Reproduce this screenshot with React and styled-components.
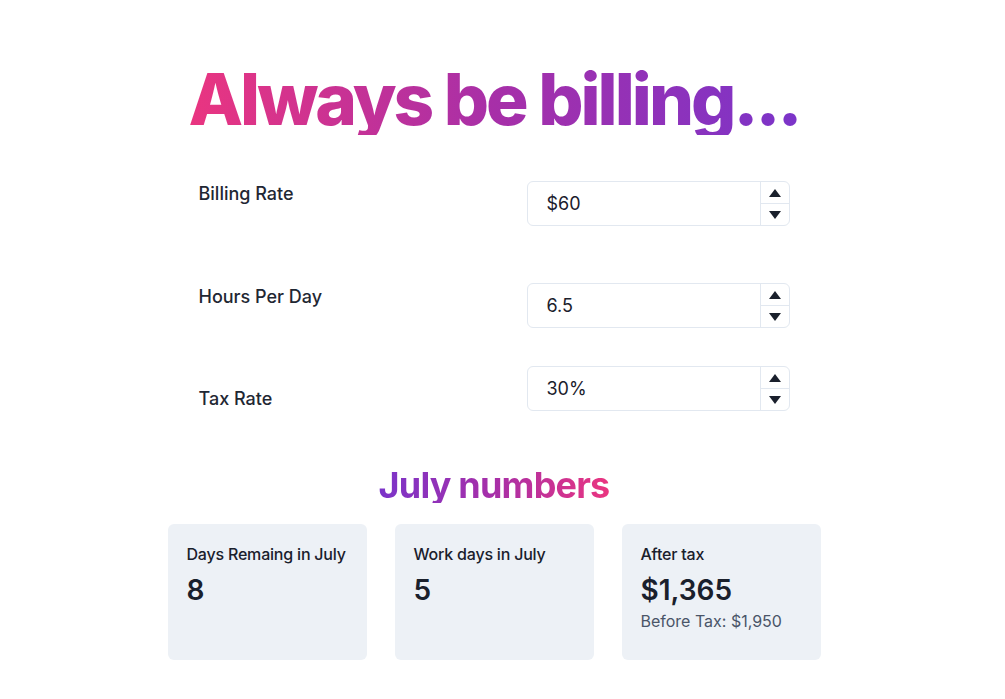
import React from "react"
import styled, { createGlobalStyle } from "styled-components"

const GlobalStyle = createGlobalStyle`
  html, body {
    margin: 0;
    padding: 0;
    background: #ffffff;
    font-family: Inter, "Noto Sans", sans-serif;
    color: #1a202c;
  }
`

const Page = styled.div`
  width: 988px;
  display: flex;
  flex-direction: column;
  align-items: center;
  padding-top: 64px;
`

const Title = styled.h1`
  margin: 0;
  font-size: 71px;
  line-height: 1;
  font-weight: 800;
  letter-spacing: -3px;
  white-space: nowrap;
  background: linear-gradient(90deg, #ea3580 0%, #a72fa8 50%, #7b34c9 100%);
  -webkit-background-clip: text;
  background-clip: text;
  color: transparent;
`

const Form = styled.div`
  width: 591px;
  margin-top: 46px;
  display: flex;
  flex-direction: column;
`

const Row = styled.div`
  display: flex;
  justify-content: space-between;
  align-items: ${(p) => (p.$end ? "flex-end" : "flex-start")};
  height: ${(p) => p.$height}px;
`

const Label = styled.label`
  font-size: 18px;
  line-height: 24px;
  font-weight: 500;
  color: #1f2733;
  padding-top: ${(p) => p.$offset || 0}px;
`

const InputBox = styled.div`
  width: 263px;
  height: 45px;
  box-sizing: border-box;
  border: 1px solid #e2e8f0;
  border-radius: 6px;
  display: flex;
  overflow: hidden;
`

const Field = styled.div`
  flex: 1;
  display: flex;
  align-items: center;
  padding-left: 19px;
  font-size: 18px;
  color: #1a202c;
`

const Stepper = styled.div`
  width: 28px;
  border-left: 1px solid #e2e8f0;
  display: flex;
  flex-direction: column;
`

const StepButton = styled.div`
  flex: 1;
  display: flex;
  align-items: center;
  justify-content: center;
  & + & {
    border-top: 1px solid #e2e8f0;
  }
`

const Arrow = ({ down }) => (
  <svg width="12" height="8" viewBox="0 0 12 8">
    <path d={down ? "M0 0 L12 0 L6 8 Z" : "M0 8 L12 8 L6 0 Z"} fill="#1a202c" />
  </svg>
)

const NumberInput = ({ value }) => (
  <InputBox>
    <Field>{value}</Field>
    <Stepper>
      <StepButton>
        <Arrow />
      </StepButton>
      <StepButton>
        <Arrow down />
      </StepButton>
    </Stepper>
  </InputBox>
)

const SubTitle = styled.h2`
  margin: 56px 0 0;
  font-size: 36px;
  line-height: 1;
  font-weight: 700;
  letter-spacing: -0.8px;
  background: linear-gradient(90deg, #7b34c9 0%, #a72fa8 50%, #ea3580 100%);
  -webkit-background-clip: text;
  background-clip: text;
  color: transparent;
`

const Cards = styled.div`
  margin-top: 21px;
  display: grid;
  grid-template-columns: repeat(3, 199px);
  gap: 28px;
`

const Card = styled.div`
  height: 136px;
  box-sizing: border-box;
  background: #edf1f6;
  border-radius: 6px;
  padding: 18px 19px;
`

const CardLabel = styled.div`
  font-size: 16px;
  line-height: 24px;
  font-weight: 500;
  letter-spacing: -0.2px;
  white-space: nowrap;
  color: #1a202c;
`

const CardValue = styled.div`
  margin-top: 6px;
  font-size: 28px;
  line-height: 36px;
  font-weight: 600;
  color: #1a202c;
`

const CardNote = styled.div`
  margin-top: 1px;
  font-size: 16px;
  line-height: 24px;
  color: #4a5568;
`

const App = () => (
  <>
    <GlobalStyle />
    <Page>
      <Title>Always be billing...</Title>
      <Form>
        <Row $height={102}>
          <Label $offset={1}>Billing Rate</Label>
          <NumberInput value="$60" />
        </Row>
        <Row $height={83}>
          <Label $offset={2}>Hours Per Day</Label>
          <NumberInput value="6.5" />
        </Row>
        <Row $height={45} $end>
          <Label>Tax Rate</Label>
          <NumberInput value="30%" />
        </Row>
      </Form>
      <SubTitle>July numbers</SubTitle>
      <Cards>
        <Card>
          <CardLabel>Days Remaing in July</CardLabel>
          <CardValue>8</CardValue>
        </Card>
        <Card>
          <CardLabel>Work days in July</CardLabel>
          <CardValue>5</CardValue>
        </Card>
        <Card>
          <CardLabel>After tax</CardLabel>
          <CardValue>$1,365</CardValue>
          <CardNote>Before Tax: $1,950</CardNote>
        </Card>
      </Cards>
    </Page>
  </>
)

export default App
